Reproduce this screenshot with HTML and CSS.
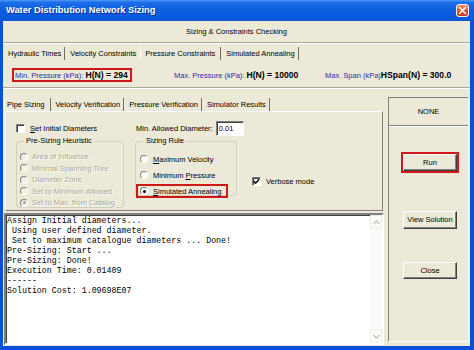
FILE: index.html
```html
<!DOCTYPE html>
<html lang="en">
<head>
    <meta charset="UTF-8">
    <title>Water Distribution Network Sizing</title>
    <link rel="stylesheet" href="styles.css">
</head>
<body>
<div class="window">
    <div class="titlebar">
        <span class="title">Water Distribution Network Sizing</span>
        <span class="close-btn">
            <svg width="9" height="9" viewBox="0 0 9 9"><path d="M1.5 1.5 L7.5 7.5 M7.5 1.5 L1.5 7.5" stroke="#fff" stroke-width="1.6" stroke-linecap="round"/></svg>
        </span>
    </div>

    <div class="client">
        <div class="caption">Sizing &amp; Constraints Checking</div>

        <div class="tabs top-tabs">
            <span class="tab">Hydraulic Times</span>
            <span class="tab before-active">Velocity Constraints</span>
            <span class="tab active">Pressure Constraints</span>
            <span class="tab">Simulated Annealing</span>
        </div>

        <div class="limits">
            <div class="limit first">
                <span class="marked">
                    <span class="limit-label">Min. Pressure (kPa):</span>
                    <b class="limit-value">H(N) = 294</b>
                </span>
            </div>
            <div class="limit second">
                <span class="limit-label">Max. Pressure (kPa):</span>
                <b class="limit-value">H(N) = 10000</b>
            </div>
            <div class="limit">
                <span class="limit-label">Max. Span (kPa)</span><b class="limit-value">HSpan(N) = 300.0</b>
            </div>
        </div>

        <div class="main">
            <div class="left">
                <div class="tabs lower-tabs">
                    <span class="tab active">Pipe Sizing</span>
                    <span class="tab">Velocity Verification</span>
                    <span class="tab">Pressure Verification</span>
                    <span class="tab">Simulator Results</span>
                </div>

                <div class="tab-panel">
                    <label class="check first-row">
                        <span class="box"></span>
                        <span><u>S</u>et Initial Diameters</span>
                    </label>
                    <div class="diameter first-row">
                        <span>Min. Allowed Diameter:</span>
                        <span class="input">0.01</span>
                    </div>

                    <fieldset class="group heuristic">
                        <legend>Pre-Sizing Heuristic</legend>
                        <div class="radio disabled"><span class="dot"></span>Area of Influence</div>
                        <div class="radio disabled"><span class="dot"></span>Minimal Spanning Tree</div>
                        <div class="radio disabled"><span class="dot"></span>Diameter Zone</div>
                        <div class="radio disabled"><span class="dot"></span>Set to Minimum Allowed</div>
                        <div class="radio disabled on"><span class="dot"></span>Set to Max. from Catalog</div>
                    </fieldset>

                    <fieldset class="group rule">
                        <legend>Sizing Rule</legend>
                        <div class="radio"><span class="dot"></span><span><u>M</u>aximum Velocity</span></div>
                        <div class="radio"><span class="dot"></span><span>Minimum <u>P</u>ressure</span></div>
                        <div class="radio on marked"><span class="dot"></span><span><u>S</u>imulated Annealing</span></div>
                    </fieldset>

                    <label class="check verbose">
                        <span class="box checked">
                            <svg width="7" height="7" viewBox="0 0 7 7"><path d="M0.8 3.2 L2.6 5.2 L6.2 1.2" fill="none" stroke="#000" stroke-width="1.5"/></svg>
                        </span>
                        <span>Verbose mode</span>
                    </label>
                </div>

                <div class="log">
                    <div class="log-text">Assign Initial diameters...
 Using user defined diameter.
 Set to maximum catalogue diameters ... Done!
Pre-Sizing: Start ...
Pre-Sizing: Done!
Execution Time: 0.01409
------
Solution Cost: 1.09698E07</div>
                    <div class="scrollbar">
                        <span class="arrow">
                            <svg width="7" height="5" viewBox="0 0 7 5"><path d="M0.5 4 L3.5 1 L6.5 4" fill="none" stroke="#c4c4bc" stroke-width="1.3"/></svg>
                        </span>
                        <span class="arrow">
                            <svg width="7" height="5" viewBox="0 0 7 5"><path d="M0.5 1 L3.5 4 L6.5 1" fill="none" stroke="#c4c4bc" stroke-width="1.3"/></svg>
                        </span>
                    </div>
                </div>
            </div>

            <div class="side">
                <div class="status">NONE</div>
                <span class="marked run-mark"><span class="button">Run</span></span>
                <span class="button view-btn">View Solution</span>
                <span class="button close-button">Close</span>
            </div>
        </div>
    </div>
</div>
</body>
</html>
```

FILE: styles.css
```css
body {
    margin: 0;
    font-family: "Liberation Sans", Arial, sans-serif;
    font-size: 7.5px;
    color: #000;
}

.window {
    width: 474px;
    height: 350px;
    background-color: #0a4fd6;
    display: flex;
    flex-direction: column;
}

.titlebar {
    height: 21px;
    flex-shrink: 0;
    display: flex;
    align-items: center;
    justify-content: space-between;
    padding: 0 5px 1px 6px;
    box-sizing: border-box;
    background: linear-gradient(to bottom, #4a9af7 0%, #1c6ee8 12%, #0b5ddf 45%, #0a5ae0 80%, #0c56d4 100%);
}

.title {
    color: #fff;
    font-weight: bold;
    font-size: 9.3px;
    text-shadow: 1px 1px #0a2f8a;
}

.close-btn {
    width: 13px;
    height: 13px;
    box-sizing: border-box;
    border: 1px solid #fff;
    border-radius: 3px;
    background: linear-gradient(to bottom, #f08a66, #de4a26 60%, #c9391b);
    display: flex;
    align-items: center;
    justify-content: center;
}

.client {
    flex: 1;
    margin: 0 4px 4px 3px;
    background-color: #ece9d8;
    display: flex;
    flex-direction: column;
}

.caption {
    height: 21px;
    line-height: 21px;
    text-align: center;
    border-bottom: 1px solid #aca899;
    box-shadow: 0 1px #fff;
}

.tabs {
    display: flex;
    align-items: center;
}

.tab {
    height: 13px;
    line-height: 13px;
    padding: 0 3px 0 5px;
    border-right: 1px solid #716f64;
}

.tab.active {
    border-left: 1px solid #fff;
    padding: 0 5px 0 4px;
}

.tab.before-active {
    border-right: none;
    padding-right: 4px;
}

.top-tabs {
    height: 18px;
    margin-top: 1px;
}

.limits {
    height: 25px;
    display: flex;
    align-items: center;
    padding-left: 9px;
    border-bottom: 1px solid #aca899;
    box-shadow: 0 1px #fff;
}

.limit.first {
    width: 162px;
}

.limit.second {
    width: 151px;
}

.limit-label {
    color: #2b2ba8;
}

.limit-value {
    font-size: 8.6px;
}

.marked {
    border: 2px solid #d01818;
}

.limits .marked {
    display: inline-block;
    padding: 0 2px 0 1px;
}

.main {
    flex: 1;
    display: flex;
    gap: 4px;
    padding: 0 1px 1px 1px;
}

.left {
    width: 380px;
    display: flex;
    flex-direction: column;
}

.lower-tabs {
    height: 14px;
    margin-top: 9px;
}

.lower-tabs .tab:first-child {
    padding-left: 2px;
    border-left: 1px solid #fff;
}

.tab-panel {
    height: 100px;
    margin-left: 1px;
    width: 378px;
    box-sizing: border-box;
    border: 1px solid;
    border-color: #fff #808080 #808080 #fff;
    display: grid;
    grid-template-columns: 119px 117px 1fr;
    grid-template-rows: 16px auto;
    padding: 8px 0 0 10px;
    align-items: start;
}

.check {
    display: flex;
    align-items: center;
    gap: 5px;
}

.check.first-row {
    height: 16px;
}

.box {
    width: 9px;
    height: 9px;
    box-sizing: border-box;
    background-color: #fff;
    border: 1px solid;
    border-color: #808080 #fff #fff #808080;
    box-shadow: inset 1px 1px #404040;
    display: flex;
    align-items: center;
    justify-content: center;
}

.diameter {
    grid-column: 2 / 4;
    display: flex;
    align-items: center;
    gap: 3px;
    margin-left: 1px;
    height: 16px;
}

.input {
    width: 28px;
    height: 15px;
    line-height: 13px;
    box-sizing: border-box;
    padding-left: 2px;
    background-color: #fff;
    border: 1px solid;
    border-color: #808080 #fff #fff #808080;
    box-shadow: inset 1px 1px #404040;
}

.group {
    margin: 0;
    padding: 0 0 0 3px;
    border: 1px solid #d0d0bf;
    border-radius: 3px;
    min-width: 0;
}

.group legend {
    padding: 0 2px;
    margin-left: 4px;
    line-height: 10px;
}

.heuristic {
    width: 108px;
    height: 72px;
    box-sizing: border-box;
    padding-top: 5px;
}

.heuristic .radio {
    height: 11.5px;
}

.rule {
    width: 102px;
    height: 60px;
    box-sizing: border-box;
    padding-top: 5px;
    padding-left: 4px;
}

.rule .radio {
    height: 16px;
    gap: 5px;
    white-space: nowrap;
}

.radio {
    display: flex;
    align-items: center;
    gap: 4px;
}

.rule .radio.marked {
    margin-left: -4px;
    padding-left: 2px;
    width: 92px;
    height: 14px;
    box-sizing: border-box;
    margin-top: 1px;
}

.dot {
    width: 8px;
    height: 8px;
    box-sizing: border-box;
    border-radius: 50%;
    border: 1px solid;
    border-color: #808080 #fff #fff #808080;
    background-color: #fff;
    display: flex;
    align-items: center;
    justify-content: center;
    flex-shrink: 0;
}

.radio.on .dot::after {
    content: "";
    width: 3px;
    height: 3px;
    border-radius: 50%;
    background-color: #000;
}

.radio.disabled {
    color: #aca899;
    text-shadow: 1px 1px #fff;
}

.radio.disabled .dot {
    background-color: #f2f0e6;
}

.radio.disabled.on .dot::after {
    background-color: #aca899;
}

.verbose {
    margin-top: 41px;
}

.log {
    flex: 1;
    margin-top: 2px;
    display: flex;
    background-color: #fff;
    border: 2px solid;
    border-color: #808080 #fff #fff #808080;
    box-shadow: inset 1px 1px #404040;
}

.log-text {
    flex: 1;
    white-space: pre;
    font-family: "Liberation Mono", "Courier New", monospace;
    font-size: 8.3px;
    line-height: 10px;
    padding: 1px 0 0 1px;
}

.scrollbar {
    width: 12px;
    background-color: #fbfbf9;
    display: flex;
    flex-direction: column;
    justify-content: space-between;
}

.arrow {
    height: 14px;
    display: flex;
    align-items: center;
    justify-content: center;
    border: 1px solid #eeede5;
    box-sizing: border-box;
    background-color: #fafaf7;
}

.side {
    width: 81px;
    margin: 9px 0 3px 0;
    box-sizing: border-box;
    border: 1px solid;
    border-color: #808080 #fff #fff #808080;
    display: flex;
    flex-direction: column;
    align-items: flex-start;
    padding-left: 12px;
}

.status {
    align-self: stretch;
    margin-left: -12px;
    height: 27px;
    line-height: 27px;
    text-align: center;
    border-bottom: 1px solid #808080;
    box-shadow: 0 1px #fff;
}

.button {
    display: block;
    width: 54px;
    height: 17px;
    line-height: 15px;
    box-sizing: border-box;
    text-align: center;
    background-color: #ece9d8;
    border: 1px solid;
    border-color: #fff #404040 #404040 #fff;
    box-shadow: inset -1px -1px #808080;
}

.run-mark {
    display: block;
    margin-top: 26px;
}

.view-btn {
    margin-top: 38px;
    margin-left: 2px;
    height: 18px;
    line-height: 16px;
}

.close-button {
    margin-top: 33px;
    margin-left: 2px;
}
```
